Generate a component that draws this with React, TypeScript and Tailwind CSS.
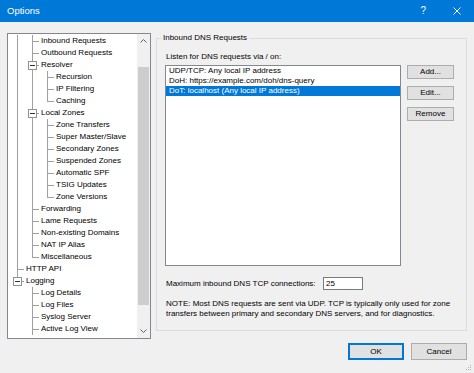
import React from "react";

type G = "v" | "n" | "t" | "l";
type Row = { label: string; g: G[]; box?: boolean };

const rows: Row[] = [
  { label: "Inbound Requests", g: ["v", "t"] },
  { label: "Outbound Requests", g: ["v", "t"] },
  { label: "Resolver", g: ["v", "t"], box: true },
  { label: "Recursion", g: ["v", "v", "t"] },
  { label: "IP Filtering", g: ["v", "v", "t"] },
  { label: "Caching", g: ["v", "v", "l"] },
  { label: "Local Zones", g: ["v", "t"], box: true },
  { label: "Zone Transfers", g: ["v", "v", "t"] },
  { label: "Super Master/Slave", g: ["v", "v", "t"] },
  { label: "Secondary Zones", g: ["v", "v", "t"] },
  { label: "Suspended Zones", g: ["v", "v", "t"] },
  { label: "Automatic SPF", g: ["v", "v", "t"] },
  { label: "TSIG Updates", g: ["v", "v", "t"] },
  { label: "Zone Versions", g: ["v", "v", "l"] },
  { label: "Forwarding", g: ["v", "t"] },
  { label: "Lame Requests", g: ["v", "t"] },
  { label: "Non-existing Domains", g: ["v", "t"] },
  { label: "NAT IP Alias", g: ["v", "t"] },
  { label: "Miscellaneous", g: ["v", "l"] },
  { label: "HTTP API", g: ["t"] },
  { label: "Logging", g: ["l"], box: true },
  { label: "Log Details", g: ["n", "t"] },
  { label: "Log Files", g: ["n", "t"] },
  { label: "Syslog Server", g: ["n", "t"] },
  { label: "Active Log View", g: ["n", "t"] },
];

function Guide({ kind, last, box }: { kind: G; last: boolean; box?: boolean }) {
  return (
    <div className="relative w-[15px] h-[12px] shrink-0">
      {(kind === "v" || kind === "t") && (
        <div className="absolute left-[7px] top-0 bottom-0 w-px bg-[#a0a0a0]" />
      )}
      {kind === "l" && <div className="absolute left-[7px] top-0 h-[6px] w-px bg-[#a0a0a0]" />}
      {last && (kind === "t" || kind === "l") && (
        <div className="absolute left-[7px] top-[6px] w-[7px] h-px bg-[#a0a0a0]" />
      )}
      {last && box && (
        <div className="absolute left-[3px] top-[2px] w-[9px] h-[9px] border border-[#919191] bg-white flex items-center justify-center">
          <div className="w-[5px] h-px bg-[#303030]" />
        </div>
      )}
    </div>
  );
}

function Chevron({ up }: { up?: boolean }) {
  return (
    <svg width="7" height="4" viewBox="0 0 7 4">
      <path
        d={up ? "M0.5 3.5 L3.5 0.5 L6.5 3.5" : "M0.5 0.5 L3.5 3.5 L6.5 0.5"}
        fill="none"
        stroke="#606060"
        strokeWidth="1"
      />
    </svg>
  );
}

function Btn({ children, def, w = "w-[47px]", h = "h-[14px]" }: { children: React.ReactNode; def?: boolean; w?: string; h?: string }) {
  return (
    <div
      className={`${w} ${h} flex items-center justify-center bg-[#e1e1e1] border ${
        def ? "border-[#0078d7] shadow-[inset_0_0_0_1px_#0078d7]" : "border-[#adadad]"
      } text-black`}
    >
      {children}
    </div>
  );
}

export default function App() {
  return (
    <div className="w-[474px] h-[373px] bg-[#f0f0f0] flex flex-col font-['Liberation_Sans',Arial,sans-serif] text-[8px] text-black overflow-hidden relative">
      {/* title bar */}
      <div className="h-[22px] bg-[#0078d7] flex items-center pl-[7px] text-white shrink-0">
        <span className="text-[9.5px] leading-none">Options</span>
        <span className="ml-auto text-[10px] leading-none mr-[27px]">?</span>
        <svg width="8" height="8" viewBox="0 0 8 8" className="mr-[13px]">
          <path d="M0.5 0.5 L7.5 7.5 M7.5 0.5 L0.5 7.5" stroke="#fff" strokeWidth="1" />
        </svg>
      </div>

      {/* main */}
      <div className="flex px-[7px] mt-[11px] h-[306px] shrink-0">
        {/* tree */}
        <div className="w-[144px] h-full border border-[#828790] bg-white flex shrink-0">
          <div className="flex-1 pl-[2px] pt-[1px] overflow-hidden">
            {rows.map((r, i) => (
              <div key={i} className="flex h-[12px] items-center">
                {r.g.map((k, j) => (
                  <Guide key={j} kind={k} last={j === r.g.length - 1} box={r.box} />
                ))}
                <span className="ml-[1px] leading-[12px] whitespace-nowrap">{r.label}</span>
              </div>
            ))}
          </div>
          <div className="w-[13px] bg-[#f0f0f0] flex flex-col items-center">
            <div className="h-[13px] flex items-center justify-center pt-[1px]">
              <Chevron up />
            </div>
            <div className="flex-1 w-full px-[1px]">
              <div className="mt-[20px] h-[238px] bg-[#cdcdcd]" />
            </div>
            <div className="h-[13px] flex items-center justify-center pb-[2px]">
              <Chevron />
            </div>
          </div>
        </div>

        {/* group box */}
        <div className="ml-[5px] mt-[5px] w-[312px] h-[293px] border border-[#dcdcdc] relative pl-[8px]">
          <span className="absolute left-[4px] top-[-6px] bg-[#f0f0f0] px-[2px] leading-[10px]">
            Inbound DNS Requests
          </span>
          <div className="mt-[13px] pl-[1px] leading-[10px]">Listen for DNS requests via / on:</div>
          <div className="flex mt-[3px]">
            <div className="w-[236px] h-[201px] border border-[#828790] bg-white">
              <div className="h-[10px] leading-[10px] pl-[3px]">UDP/TCP: Any local IP address</div>
              <div className="h-[10px] leading-[10px] pl-[3px]">DoH: https://example.com/doh/dns-query</div>
              <div className="h-[10px] leading-[10px] pl-[3px] bg-[#0078d7] text-white">
                DoT: localhost (Any local IP address)
              </div>
            </div>
            <div className="ml-[6px] flex flex-col gap-[7px]">
              <Btn>Add...</Btn>
              <Btn>Edit...</Btn>
              <Btn>Remove</Btn>
            </div>
          </div>
          <div className="flex items-center mt-[11px]">
            <div className="w-[158px] pl-[1px] leading-[10px]">Maximum inbound DNS TCP connections:</div>
            <div className="w-[40px] h-[13px] border border-[#7a7a7a] bg-white pl-[2px] leading-[11px]">25</div>
          </div>
          <div className="mt-[9px] pl-[1px] leading-[10px] whitespace-nowrap">
            NOTE: Most DNS requests are sent via UDP. TCP is typically only used for zone
            <br />
            transfers between primary and secondary DNS servers, and for diagnostics.
          </div>
        </div>
      </div>

      {/* footer */}
      <div className="flex justify-end gap-[7px] pr-[7px] mt-[4px]">
        <Btn def w="w-[56px]" h="h-[17px]">
          OK
        </Btn>
        <Btn w="w-[56px]" h="h-[17px]">
          Cancel
        </Btn>
      </div>
      <svg width="6" height="6" viewBox="0 0 6 6" className="absolute right-[2px] bottom-[2px]">
        <rect x="4" y="0" width="1" height="1" fill="#b0b0b0" />
        <rect x="2" y="2" width="1" height="1" fill="#b0b0b0" />
        <rect x="4" y="2" width="1" height="1" fill="#b0b0b0" />
        <rect x="0" y="4" width="1" height="1" fill="#b0b0b0" />
        <rect x="2" y="4" width="1" height="1" fill="#b0b0b0" />
        <rect x="4" y="4" width="1" height="1" fill="#b0b0b0" />
      </svg>
    </div>
  );
}
